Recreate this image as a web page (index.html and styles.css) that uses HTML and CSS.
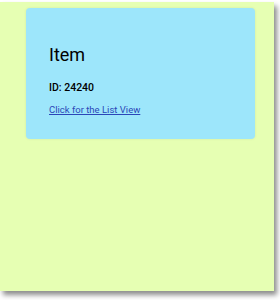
FILE: index.html
```html
<!DOCTYPE html>
<html>
<head>
<meta charset="utf-8">
<link rel="stylesheet" href="styles.css">
</head>
<body>
<div class="frame">
  <div class="card">
    <h1 class="title">Item</h1>
    <p class="id">ID: 24240</p>
    <a class="link" href="#">Click for the List View</a>
  </div>
</div>
</body>
</html>
```
FILE: styles.css
```css
html, body {
  margin: 0;
  padding: 0;
  background: #ffffff;
  font-family: Roboto, "Liberation Sans", sans-serif;
}
body {
  padding-top: 2px;
  height: 300px;
  box-sizing: border-box;
}
.frame {
  width: 274px;
  height: 289px;
  background: #e6ffb3;
  box-shadow: 3px 4px 5px rgba(0, 0, 0, 0.45);
  padding-top: 6px;
  box-sizing: border-box;
}
.card {
  margin-left: 26px;
  width: 229px;
  height: 131px;
  box-sizing: border-box;
  background: #9de6fb;
  border-radius: 4px;
  padding: 36px 23px 0 23px;
  box-shadow: 0 0 3px rgba(0, 0, 0, 0.08);
}
.title {
  margin: 0;
  font-size: 18px;
  font-weight: 400;
  line-height: 22px;
  color: #000;
}
.id {
  margin: 15px 0 0 0;
  font-size: 10.5px;
  font-weight: 500;
  line-height: 14px;
  color: #000;
}
.link {
  display: inline-block;
  margin-top: 8px;
  font-size: 9.5px;
  line-height: 13px;
  color: #2b46b8;
}
```
